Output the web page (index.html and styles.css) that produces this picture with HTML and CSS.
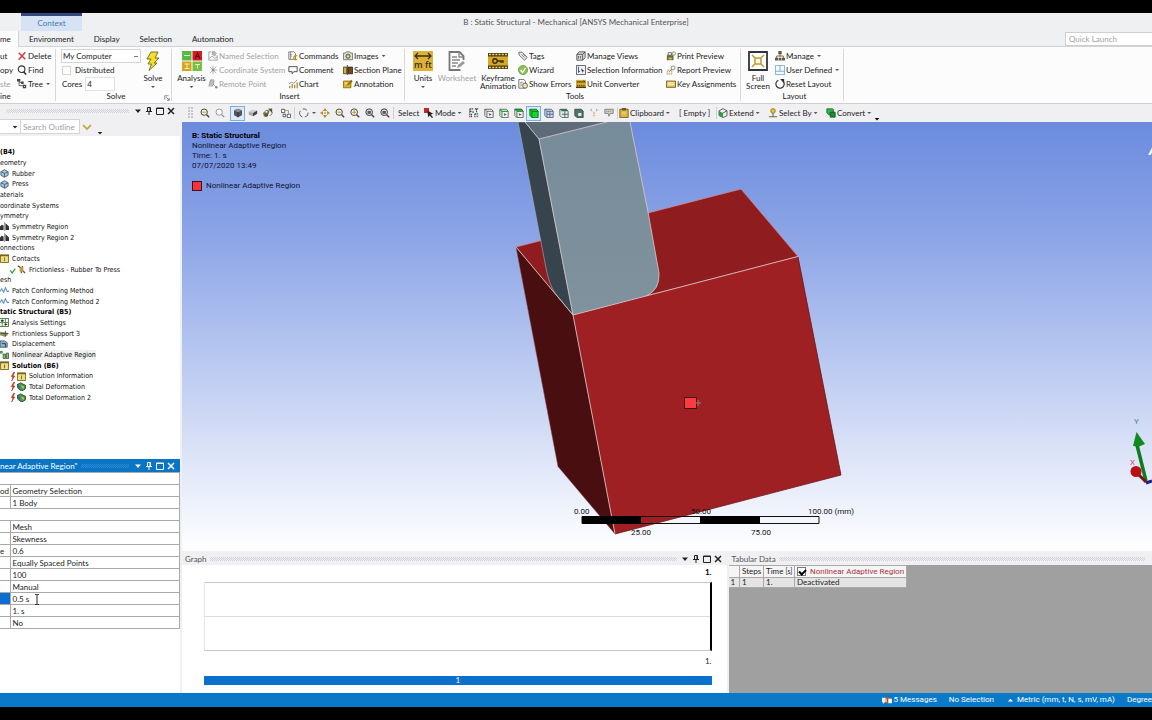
FILE: index.html
```html
<!DOCTYPE html>
<html lang="en">
<head>
  <meta charset="UTF-8" />
  <meta name="viewport" content="width=device-width, initial-scale=1.0" />
  <title>B : Static Structural - Mechanical [ANSYS Mechanical Enterprise]</title>
  <link rel="stylesheet" href="styles.css">
</head>
<body>
  <!-- Icon sprite -->
  <svg class="sprite" aria-hidden="true">
    <symbol id="i-delete" viewBox="0 0 12 12"><path d="M2 2l8 8M10 1.500L2 10.500" stroke="#d4343a" stroke-width="1.600" fill="none"/></symbol>
    <symbol id="i-find" viewBox="0 0 12 12"><circle cx="5.500" cy="5" r="4" fill="none" stroke="#333" stroke-width="1.300"/><path d="M8 8l3 3.500" stroke="#333" stroke-width="1.800"/></symbol>
    <symbol id="i-tree" viewBox="0 0 12 12"><path d="M2.500 2v6h5M3 4h3" fill="none" stroke="#444"/><path d="M0 0h4v3H0zM5 3h3v3H5zM7 7h4v4H7z" fill="#444"/><path d="M8.500 8.500h1v1h-1z" fill="#fff"/></symbol>
    <symbol id="i-bolt" viewBox="0 0 14 20"><path d="M5 1h7L9 7h4L8 12h3L3 19.500 5.500 13H2l3-5H1z" fill="#f6df27" stroke="#6d6420" stroke-width=".9"/></symbol>
    <symbol id="i-launch" viewBox="0 0 8 8"><path d="M1 6V1h5M3 3l4 4M7 4v3H4" fill="none" stroke="#555" stroke-width=".9"/></symbol>
    <symbol id="i-analysis" viewBox="0 0 20 20"><path d="M0 0h9.500v9.500H0z" fill="#57b947"/><path d="M10.500 0H20v9.500h-9.500z" fill="#d71920"/><path d="M0 10.500h9.500V20H0z" fill="#d7a51c"/><path d="M10.500 10.500H20V20h-9.500z" fill="#76c043"/><path d="M2 4.500h6M2.500 13h5M2.500 17.500h5M5 13v4M13 13.500h5M15.500 13.500v4" stroke="#e6f3c2" fill="none"/><path d="M13 8l2.500-6L18 8M14 5.500h3" fill="none" stroke="#5f0d10" stroke-width="1.200"/></symbol>
    <symbol id="i-named" viewBox="0 0 12 12"><path d="M4 1H1v10h10V5M1 9l4-3 3 3 3-2" fill="none" stroke="#999"/><path d="M5 1l2-1 3 3-2 3-3-2z" fill="#bbb" stroke="#888" stroke-width=".7"/></symbol>
    <symbol id="i-coord" viewBox="0 0 12 12"><path d="M6 1v10M2 2l8 8M10 2l-8 8M6 6h5" stroke="#aaa" stroke-width="1.100"/><circle cx="6" cy="6" r="1.500" fill="#888"/></symbol>
    <symbol id="i-remote" viewBox="0 0 12 12"><path d="M1 9l2-8h4v5l-2 3M7 7l3 3" fill="#bbb" stroke="#999"/><circle cx="10" cy="10" r="1.500" fill="#888"/></symbol>
    <symbol id="i-commands" viewBox="0 0 12 12"><path d="M1 1h6l2 2v7H1z" fill="#fff" stroke="#666"/><path d="M2 4h3M2 6h3M3 1v9" stroke="#888"/><path d="M11 6a2.500 2.500 0 1 0 0 4" fill="none" stroke="#c19a1c" stroke-width="1.500"/></symbol>
    <symbol id="i-comment" viewBox="0 0 12 12"><path d="M1 2h10v6H7L5 10.500V8H1z" fill="#fff" stroke="#444" stroke-width="1.100"/></symbol>
    <symbol id="i-chart" viewBox="0 0 12 12"><path d="M2 11V8M5 11V6M8 11V7M11 11V4" stroke="#a88c33" stroke-width="1.500"/><path d="M1 6l3-2 3 1 4-4" fill="none" stroke="#888"/></symbol>
    <symbol id="i-images" viewBox="0 0 12 12"><path d="M.5 2.500H3L4 1h4l1 1.500h2.500v8H.5z" fill="#e6e7cf" stroke="#666"/><circle cx="6" cy="6.300" r="2.600" fill="#a5af80" stroke="#4b5341"/><circle cx="6" cy="6.300" r="1" fill="#fff"/></symbol>
    <symbol id="i-section" viewBox="0 0 12 12"><path d="M.5 2.500h4v8h-4z" fill="#d8b13a" stroke="#4b3a11"/><path d="M6 2.500h5.500v8H6z" fill="#6f4b24" stroke="#33230c"/><path d="M5.200 0v12" stroke="#333"/></symbol>
    <symbol id="i-annot" viewBox="0 0 12 12"><path d="M.5 2.500h9v8h-9z" fill="#e2b422" stroke="#7e6513"/><path d="M3 8c2 1 3-4 7-7l1.500 2C9 6 7 8 3 8z" fill="#8c6e1b"/><path d="M2 5h3" stroke="#fff"/></symbol>
    <symbol id="i-units" viewBox="0 0 20 20"><path d="M0 0h20v20H0z" fill="#ddb23b"/><path d="M2 5h16M5 2L2 5l3 3M15 2l3 3-3 3" fill="none" stroke="#3b2f0d" stroke-width="1.300"/><text x="1" y="17" class="unit-text">m ft</text></symbol>
    <symbol id="i-sheet" viewBox="0 0 18 20"><path d="M15.500 9V5l-4-4H1.500v18h11" fill="none" stroke="#777" stroke-width="1.800"/><path d="M11 1v5h4M4 6h5M4 9h8M4 12h6M4 15h4" fill="none" stroke="#888" stroke-width="1.300"/><path d="M9 17l1-3 5-4 2 2-5 4z" fill="#999"/></symbol>
    <symbol id="i-key" viewBox="0 0 20 16"><path d="M0 0h20v16H0z" fill="#4d3e12"/><path d="M0 3.500h20v9H0z" fill="#d7a928"/><path d="M1 1.500h18M1 14.500h18" stroke="#e8cf82" stroke-width="1.400" stroke-dasharray="2 1.200"/><circle cx="7" cy="8" r="2.200" fill="none" stroke="#3b2f0d" stroke-width="1.400"/><path d="M9 8h6v2M13 8v2" fill="none" stroke="#3b2f0d" stroke-width="1.300"/></symbol>
    <symbol id="i-tag" viewBox="0 0 12 12"><path d="M1 1.500h4l6 6-3 3.500-6.500-6z" fill="#eee" stroke="#555"/><path d="M4 4l4 4M6 3.500l3 3" stroke="#777"/></symbol>
    <symbol id="i-wizard" viewBox="0 0 12 12"><circle cx="6" cy="6" r="5.500" fill="#8cc152" stroke="#6d9c3d"/><path d="M3 6l2.500 3L9 3.500" fill="none" stroke="#fff" stroke-width="1.600"/></symbol>
    <symbol id="i-errors" viewBox="0 0 12 12"><path d="M1 .5h6l2 2.500v8H1z" fill="#fff" stroke="#555"/><path d="M2.500 4h4M2.500 6h3M2.500 8h2" stroke="#888"/><circle cx="8.500" cy="8" r="3" fill="#f0e3b0" stroke="#555"/></symbol>
    <symbol id="i-views" viewBox="0 0 12 12"><path d="M1 4l3-3h7v7l-3 3H1z" fill="#ddd" stroke="#444"/><path d="M1 4h7v7M8 4l3-3M3 6v3M5.500 6v3" fill="none" stroke="#444"/></symbol>
    <symbol id="i-info" viewBox="0 0 12 12"><path d="M.5 .5h11v11H.5z" fill="#eef1fa" stroke="#444"/><path d="M3 2v7M3 9l2-2" stroke="#3c5ea0" stroke-width="1.200"/><path d="M6 4l4 3.500H8V10z" fill="#222"/></symbol>
    <symbol id="i-conv" viewBox="0 0 12 12"><path d="M0 1h12v10H0z" fill="#d9ac2f"/><path d="M1 3.500h10M9 2l2 1.500M2 7v2M4.500 7v2M7 7v2M9.500 7v2" stroke="#463710" stroke-width="1.200"/><path d="M0 10h12" stroke="#463710" stroke-width="1.500"/></symbol>
    <symbol id="i-print" viewBox="0 0 12 12"><path d="M1 5h8v6H1z" fill="#6d6a3a"/><path d="M2.500 2h4v3h-4z" fill="#fff" stroke="#555"/><path d="M3 8h4v2H3z" fill="#d6c36a"/><circle cx="9.500" cy="3" r="2" fill="none" stroke="#777"/></symbol>
    <symbol id="i-report" viewBox="0 0 12 12"><path d="M2 6h5v5H1z" fill="#f3eac2" stroke="#a39a77" stroke-dasharray="2 1"/><circle cx="8.500" cy="3.500" r="2.300" fill="none" stroke="#777"/><path d="M7 5L4 8" stroke="#777"/></symbol>
    <symbol id="i-keys" viewBox="0 0 12 12"><path d="M.5 2.500h11v7.500H.5z" fill="#eccb64" stroke="#614c14"/><path d="M2.500 4.500h7M2.500 6.500h7" stroke="#fff6d0" stroke-width="1.200"/></symbol>
    <symbol id="i-full" viewBox="0 0 20 20"><path d="M1 1h18v18H1z" fill="#fff" stroke="#2d3340" stroke-width="1.800"/><path d="M7 7h6v6H7zM4 4l3 3M16 4l-3 3M4 16l3-3M16 16l-3-3" fill="none" stroke="#c39b27" stroke-width="1.500"/></symbol>
    <symbol id="i-manage" viewBox="0 0 12 12"><path d="M6 3v4M2 9V6h8v3" fill="none" stroke="#66583a"/><path d="M4 0h4v4H4zM0 8h4v3.500H0zM4.700 8h3v3.500h-3zM8.300 8H12v3.500H8.300z" fill="#66583a"/></symbol>
    <symbol id="i-user" viewBox="0 0 12 12"><path d="M.5 .5h11v11H.5zM6 .5v7M.5 7.500h11" fill="#f4f9fd" stroke="#6fa2c8"/></symbol>
    <symbol id="i-reset" viewBox="0 0 12 12"><path d="M4 1.500a5 5 0 1 0 5 .5" fill="none" stroke="#333" stroke-width="1.400"/><path d="M6 0h5v5z" fill="#333"/></symbol>

    <symbol id="i-zoomin" viewBox="0 0 12 12"><circle cx="5" cy="5" r="3.800" fill="#fbf4d8" stroke="#444" stroke-width="1.200"/><path d="M8 8l3 3" stroke="#444" stroke-width="1.800"/><path d="M3 5h4" stroke="#b08c1e" stroke-width="1.200"/></symbol>
    <symbol id="i-zoomout" viewBox="0 0 12 12"><circle cx="5" cy="5" r="3.800" fill="#fff" stroke="#888"/><path d="M8 8l3 3" stroke="#888" stroke-width="1.500"/></symbol>
    <symbol id="i-zoomfit" viewBox="0 0 12 12"><circle cx="5" cy="5" r="4" fill="#fff" stroke="#444" stroke-width="1.200"/><path d="M8 8l3 3" stroke="#444" stroke-width="1.800"/><path d="M5 2.500v5M2.500 5h5" stroke="#c0951c" stroke-width="1.300"/></symbol>
    <symbol id="i-zoomsel" viewBox="0 0 12 12"><circle cx="5" cy="5" r="4" fill="#ddd" stroke="#444" stroke-width="1.200"/><path d="M8 8l3 3" stroke="#444" stroke-width="1.800"/><path d="M3 3.500h4v3.500H3z" fill="#556"/></symbol>
    <symbol id="i-shade" viewBox="0 0 12 12"><path d="M6 .8l4.800 2v6L6 11.200l-4.800-2.400v-6z" fill="#50565e"/><path d="M1.200 2.800L6 .8l4.800 2L6 5z" fill="#8c9299"/><path d="M6 5v6.200" stroke="#222"/></symbol>
    <symbol id="i-wedge" viewBox="0 0 12 12"><path d="M1 4l5 2v4L1 8z" fill="#aaa"/><path d="M1 4l5-2 5 1-5 3z" fill="#ccc"/><path d="M6 6l5-3v4l-5 3z" fill="#444"/></symbol>
    <symbol id="i-rotor" viewBox="0 0 12 12"><path d="M0 6l4-4 4 1-1 4-3 4-3-1z" fill="#8a7448"/><path d="M6 1l5-.5V6M2 7h4v3H2z" fill="#54514b"/><circle cx="4" cy="4.500" r="1.200" fill="#eee"/><path d="M8 9c2 0 3-2 3-4" fill="none" stroke="#555"/></symbol>
    <symbol id="i-blocks" viewBox="0 0 12 12"><path d="M.5 1.500h4v4h-4zM7.500 7.500h4v4h-4zM2.500 7.500h3v3h-3z" fill="#fff" stroke="#444"/><path d="M5 3h4v4" fill="none" stroke="#b8912a"/></symbol>
    <symbol id="i-rotate" viewBox="0 0 12 12"><path d="M4.500 1.200a5 5 0 0 1 5 1.500M11 5.500a5 5 0 0 1-4 5.300M4 10.800a5 5 0 0 1-2.500-7.500" fill="none" stroke="#555" stroke-width="1.100"/></symbol>
    <symbol id="i-pan" viewBox="0 0 12 12"><path d="M6 0l2.500 3.500h-5zM6 12l2.500-3.500h-5zM0 6l3.500-2.500v5zM12 6L8.500 3.500v5z" fill="#b98a1c"/><circle cx="6" cy="6" r="1" fill="#8a6b1c"/></symbol>
    <symbol id="i-mode" viewBox="0 0 12 12"><path d="M0 0h6v6H0z" fill="#c7252b"/><path d="M4 3l7 4-3 1 3 3-1.500 1-2.700-3L5 11z" fill="#222"/></symbol>
    <symbol id="i-vertex" viewBox="0 0 12 12"><path d="M1 1h4M1 4h3M1 1v10M7 1h4M9 1v4M7 7h4M7 7v4M3 7v4" fill="none" stroke="#444" stroke-dasharray="2 .7" stroke-width="1.300"/><path d="M4 4h2v2H4zM9 9h2v2H9z" fill="#39a34a"/></symbol>
    <symbol id="i-box" viewBox="0 0 12 12"><path d="M1 1.500h8L11 4v7.500H3.500L1 9z" fill="#f4f4f4" stroke="#555"/><path d="M1 1.500L3.500 4H11M3.500 4v7.500" fill="none" stroke="#555"/><path d="M5.500 6l4 2-2 .5L7 10z" fill="#444"/></symbol>
    <symbol id="i-boxedge" viewBox="0 0 12 12"><path d="M1 1.500h8L11 4v7.500H3.500L1 9z" fill="#f4f4f4" stroke="#555"/><path d="M1 1.500L3.500 4H11M3.500 4v7.500" fill="none" stroke="#2b9e3f" stroke-width="1.300"/><path d="M5.500 6l4 2-2 .5L7 10z" fill="#444"/></symbol>
    <symbol id="i-boxface" viewBox="0 0 12 12"><path d="M1 1.500h8L11 4v7.500H3.500L1 9z" fill="#f4f4f4" stroke="#555"/><path d="M1 1.500h8L11 4H3.500z" fill="#35b24a" stroke="#14692a"/><path d="M3.500 4v7.500" stroke="#14692a"/><path d="M5.500 6l4 2-2 .5L7 10z" fill="#444"/></symbol>
    <symbol id="i-body" viewBox="0 0 12 12"><path d="M1 1.500h8L11 4v7.500H3.500L1 9z" fill="#14d82c" stroke="#0b6f1c"/><path d="M1 1.500L3.500 4H11M3.500 4v7.500" fill="none" stroke="#0b6f1c"/></symbol>
    <symbol id="i-mesh" viewBox="0 0 12 12"><path d="M1 1.500h8L11 4v7.500H3.500L1 9z" fill="#cdd9ea" stroke="#4a5f78"/><path d="M1 1.500L3.500 4H11M3.500 4v7.500M3.500 7.500H11M7 4v7" fill="none" stroke="#4a5f78"/></symbol>
    <symbol id="i-face" viewBox="0 0 12 12"><path d="M1 1.500h8L11 4v7.500H3.500L1 9z" fill="#dfe9e2" stroke="#3f5b52"/><path d="M1 1.500h8L11 4H3.500z" fill="#2f6b4a"/><path d="M3.500 7.500H11M7 4v7" stroke="#3f5b52"/></symbol>
    <symbol id="i-elem" viewBox="0 0 12 12"><path d="M1 1.500h8L11 4v7.500H3.500L1 9z" fill="#4f7466" stroke="#33453f"/><path d="M5 6h4v3.500H5z" fill="#dfe9e2"/></symbol>
    <symbol id="i-probe" viewBox="0 0 12 12"><path d="M1 2l3 2M11 2L8 4M3 1v2M9 1v2" stroke="#aaa"/><path d="M6 5v6" stroke="#c49a4a" stroke-width="1.500" stroke-dasharray="2 1"/></symbol>
    <symbol id="i-note" viewBox="0 0 12 12"><path d="M1 1.500h10v5H7.500L6 10 5 6.500H1z" fill="#cfd0c0" stroke="#777"/><path d="M3 4h6" stroke="#666" stroke-dasharray="1 1"/></symbol>
    <symbol id="i-clip" viewBox="0 0 12 12"><path d="M1 1.500h10v10H1z" fill="#dfb23a" stroke="#6e5615"/><path d="M3.500 0h5v3h-5z" fill="#6e5615"/><path d="M3 5h6M3 7h6" stroke="#f3d98c"/></symbol>
    <symbol id="i-extend" viewBox="0 0 12 12"><path d="M6 .8l4.800 2.500v6L6 11.500l-4.800-2.500V3.500z" fill="#e9f2ea" stroke="#444"/><path d="M1.200 3.500L6 6v5.500l-4.800-2.500z" fill="#2a9c42"/><path d="M6 6l4.800-2.700" stroke="#444"/></symbol>
    <symbol id="i-selby" viewBox="0 0 12 12"><circle cx="6" cy="3.500" r="2.800" fill="#e7bd42" stroke="#997817"/><path d="M6 6v4M1 10.500h10" stroke="#666" stroke-width="1.300"/></symbol>
    <symbol id="i-convert" viewBox="0 0 12 12"><path d="M1 1h7l1 1v6H3L1 6z" fill="#35b24a" stroke="#116b25"/><path d="M5 5h6v6H5z" fill="#1d8c33" stroke="#0c551b"/></symbol>

    <symbol id="i-down" viewBox="0 0 8 8"><path d="M1 2.500h6L4 6z" fill="currentColor"/></symbol>
    <symbol id="i-pin" viewBox="0 0 8 8"><path d="M2.500 .5h3v4h-3zM1 4.500h6M4 4.500V8M5 .5v4" fill="none" stroke="currentColor"/></symbol>
    <symbol id="i-max" viewBox="0 0 8 8"><path d="M.5 1h7v6.500h-7zM.5 1.500h7" fill="none" stroke="currentColor"/></symbol>
    <symbol id="i-close" viewBox="0 0 8 8"><path d="M1 1l6 6M7 1L1 7" fill="none" stroke="currentColor" stroke-width="1.500"/></symbol>
    <symbol id="i-chev" viewBox="0 0 10 8"><path d="M1 2l4 4 4-4" fill="none" stroke="#c3a03d" stroke-width="1.700"/></symbol>

    <symbol id="t-body" viewBox="0 0 10 10"><path d="M5 .8L9 3v4L5 9.200 1 7V3z" fill="#a9c3d4" stroke="#41647a"/><path d="M1 3l4 2 4-2M5 5v4" fill="none" stroke="#41647a"/></symbol>
    <symbol id="t-sym" viewBox="0 0 10 10"><path d="M0 9V5l2-2 2 1v5zM6 9V1l4 4v4z" fill="#333"/><path d="M5 0v10" stroke="#999"/></symbol>
    <symbol id="t-folder" viewBox="0 0 10 10"><path d="M.5 1.500h9v8h-9z" fill="#f0dd85" stroke="#77651c"/><path d="M0 1.500h10" stroke="#77651c" stroke-width="2"/><path d="M5 4v4" stroke="#77651c"/></symbol>
    <symbol id="t-contact" viewBox="0 0 10 10"><path d="M1 1l3 2 1 6M9 9L6 6V1" fill="none" stroke="#74581f" stroke-width="1.500"/><path d="M3 3l4-1v5l-4 1z" fill="#c29a4d"/></symbol>
    <symbol id="t-check" viewBox="0 0 6 10"><path d="M0 6l2 3 3.500-5" fill="none" stroke="#2d9b45" stroke-width="1.300"/></symbol>
    <symbol id="t-patch" viewBox="0 0 10 10"><path d="M0 6l2-3 2 4 2-5 2 4 2 0" fill="none" stroke="#5e8fc9" stroke-width="1.200"/></symbol>
    <symbol id="t-settings" viewBox="0 0 10 10"><path d="M0 .5h9.500v9H0" fill="#eef6ea" stroke="#456b3b"/><path d="M2.500 1v8M6 1v8M0 5h9" stroke="#5a8450"/><path d="M1 3h3M5 7h3" stroke="#333" stroke-width="1.500"/></symbol>
    <symbol id="t-support" viewBox="0 0 10 10"><path d="M0 3l7 1 3 1-4 4-6-2z" fill="#8a9169"/><path d="M1 5h8M6 2v6" stroke="#4d553a"/></symbol>
    <symbol id="t-disp" viewBox="0 0 10 10"><path d="M0 1h5l3 2v5H0z" fill="#8fb3c9" stroke="#3f5f74"/><path d="M2 4h4v4" fill="none" stroke="#20394a"/></symbol>
    <symbol id="t-adapt" viewBox="0 0 10 10"><path d="M0 1h3v3H0z" fill="#4c9a41"/><path d="M3.500 4.500h2.500v5H3.500zM7 3.500h2.500v6H7z" fill="#8cc07d" stroke="#41603b"/></symbol>
    <symbol id="t-bolt" viewBox="0 0 6 10"><path d="M4 0L1 5h2L1.500 10 5 4.500H3L5 0z" fill="#d8452c" stroke="#a5301b" stroke-width=".6"/></symbol>
    <symbol id="t-deform" viewBox="0 0 10 10"><path d="M0 3l4-2 6 3-1 4-4 2-4-3z" fill="#3f9a57" stroke="#2c4b34"/><path d="M4 4l4 1-1 3z" fill="#e5b93a"/><path d="M1 4l2 2" stroke="#2c61a8" stroke-width="1.500"/></symbol>
    <symbol id="i-msg" viewBox="0 0 12 10"><path d="M1 2h5v5H4L2 9V7H1z" fill="#f2f2f2"/><path d="M5 1h4v7H5z" fill="#b9502f"/><path d="M8 3h4v5H8z" fill="#fff"/><path d="M6 3v4" stroke="#f0c75c"/></symbol>
  </svg>

  <div class="app">
    <header class="titlebar">
      <div class="context-holder"><span class="context-tab">Context</span></div>
      <h1>B : Static Structural - Mechanical [ANSYS Mechanical Enterprise]</h1>
    </header>

    <div class="tabrow">
      <nav class="tabs">
        <button class="tab active">me</button>
        <button class="tab">Environment</button>
        <button class="tab">Display</button>
        <button class="tab">Selection</button>
        <button class="tab">Automation</button>
      </nav>
      <input class="quick" type="text" placeholder="Quick Launch" aria-label="Quick Launch">
    </div>

    <!-- Ribbon -->
    <div class="ribbon">
      <section class="group g-outline">
        <div class="group-body">
          <div class="stack">
            <button class="cmd">ut</button>
            <button class="cmd">opy</button>
            <button class="cmd off">ste</button>
          </div>
          <div class="stack">
            <button class="cmd"><svg><use href="#i-delete"/></svg>Delete</button>
            <button class="cmd"><svg><use href="#i-find"/></svg>Find</button>
            <button class="cmd"><svg><use href="#i-tree"/></svg>Tree<i class="caret"></i></button>
          </div>
        </div>
        <h2>ine</h2>
      </section>

      <section class="group g-solve">
        <div class="group-body">
          <div class="stack">
            <select class="computer" aria-label="Solve on"><option>My Computer</option></select>
            <label class="check"><input type="checkbox">Distributed</label>
            <label class="cores">Cores<input type="text" value="4"></label>
          </div>
          <button class="big"><svg><use href="#i-bolt"/></svg>Solve<i class="caret"></i></button>
        </div>
        <h2>Solve</h2>
        <button class="launcher" aria-label="Solve options"><svg><use href="#i-launch"/></svg></button>
      </section>

      <section class="group g-insert">
        <div class="group-body">
          <button class="big"><svg><use href="#i-analysis"/></svg>Analysis<i class="caret"></i></button>
          <div class="stack">
            <button class="cmd off"><svg><use href="#i-named"/></svg>Named Selection</button>
            <button class="cmd off"><svg><use href="#i-coord"/></svg>Coordinate System</button>
            <button class="cmd off"><svg><use href="#i-remote"/></svg>Remote Point</button>
          </div>
          <div class="stack">
            <button class="cmd"><svg><use href="#i-commands"/></svg>Commands</button>
            <button class="cmd"><svg><use href="#i-comment"/></svg>Comment</button>
            <button class="cmd"><svg><use href="#i-chart"/></svg>Chart</button>
          </div>
          <div class="stack">
            <button class="cmd"><svg><use href="#i-images"/></svg>Images<i class="caret"></i></button>
            <button class="cmd"><svg><use href="#i-section"/></svg>Section Plane</button>
            <button class="cmd"><svg><use href="#i-annot"/></svg>Annotation</button>
          </div>
        </div>
        <h2>Insert</h2>
      </section>

      <section class="group g-tools">
        <div class="group-body">
          <button class="big"><svg><use href="#i-units"/></svg>Units<i class="caret"></i></button>
          <button class="big off"><svg><use href="#i-sheet"/></svg>Worksheet</button>
          <button class="big"><svg><use href="#i-key"/></svg>Keyframe<br>Animation</button>
          <div class="stack">
            <button class="cmd"><svg><use href="#i-tag"/></svg>Tags</button>
            <button class="cmd"><svg><use href="#i-wizard"/></svg>Wizard</button>
            <button class="cmd"><svg><use href="#i-errors"/></svg>Show Errors</button>
          </div>
          <div class="stack">
            <button class="cmd"><svg><use href="#i-views"/></svg>Manage Views</button>
            <button class="cmd"><svg><use href="#i-info"/></svg>Selection Information</button>
            <button class="cmd"><svg><use href="#i-conv"/></svg>Unit Converter</button>
          </div>
          <div class="stack">
            <button class="cmd"><svg><use href="#i-print"/></svg>Print Preview</button>
            <button class="cmd"><svg><use href="#i-report"/></svg>Report Preview</button>
            <button class="cmd"><svg><use href="#i-keys"/></svg>Key Assignments</button>
          </div>
        </div>
        <h2>Tools</h2>
      </section>

      <section class="group g-layout">
        <div class="group-body">
          <button class="big"><svg><use href="#i-full"/></svg>Full<br>Screen</button>
          <div class="stack">
            <button class="cmd"><svg><use href="#i-manage"/></svg>Manage<i class="caret"></i></button>
            <button class="cmd"><svg><use href="#i-user"/></svg>User Defined<i class="caret"></i></button>
            <button class="cmd"><svg><use href="#i-reset"/></svg>Reset Layout</button>
          </div>
        </div>
        <h2>Layout</h2>
      </section>
    </div>

    <div class="workspace">
      <aside class="sidebar">
        <section class="outline">
          <div class="panel-head">
            <span class="dots"></span>
            <span class="controls">
              <button aria-label="Menu"><svg><use href="#i-down"/></svg></button>
              <button aria-label="Pin"><svg><use href="#i-pin"/></svg></button>
              <button aria-label="Maximize"><svg><use href="#i-max"/></svg></button>
              <button aria-label="Close"><svg><use href="#i-close"/></svg></button>
            </span>
          </div>
          <div class="search">
            <button class="filter" aria-label="Filter"><svg><use href="#i-down"/></svg></button>
            <input type="text" placeholder="Search Outline" aria-label="Search Outline">
            <button aria-label="Expand"><svg class="chev"><use href="#i-chev"/></svg></button>
            <button class="more" aria-label="More"><svg><use href="#i-down"/></svg></button>
          </div>
          <ul class="tree">
            <li class="root bold">(B4)</li>
            <li class="root">eometry</li>
            <li><svg><use href="#t-body"/></svg>Rubber</li>
            <li><svg><use href="#t-body"/></svg>Press</li>
            <li class="root">aterials</li>
            <li class="root">oordinate Systems</li>
            <li class="root">ymmetry</li>
            <li><svg><use href="#t-sym"/></svg>Symmetry Region</li>
            <li><svg><use href="#t-sym"/></svg>Symmetry Region 2</li>
            <li class="root">onnections</li>
            <li><svg><use href="#t-folder"/></svg>Contacts</li>
            <li class="leaf"><svg class="state"><use href="#t-check"/></svg><svg><use href="#t-contact"/></svg>Frictionless - Rubber To Press</li>
            <li class="root">esh</li>
            <li><svg><use href="#t-patch"/></svg>Patch Conforming Method</li>
            <li><svg><use href="#t-patch"/></svg>Patch Conforming Method 2</li>
            <li class="root bold">tatic Structural (B5)</li>
            <li><svg><use href="#t-settings"/></svg>Analysis Settings</li>
            <li><svg><use href="#t-support"/></svg>Frictionless Support 3</li>
            <li><svg><use href="#t-disp"/></svg>Displacement</li>
            <li><svg><use href="#t-adapt"/></svg><span class="current">Nonlinear Adaptive Region</span></li>
            <li class="bold"><svg><use href="#t-folder"/></svg>Solution (B6)</li>
            <li class="leaf"><svg class="state"><use href="#t-bolt"/></svg><svg><use href="#t-folder"/></svg>Solution Information</li>
            <li class="leaf"><svg class="state"><use href="#t-bolt"/></svg><svg><use href="#t-deform"/></svg>Total Deformation</li>
            <li class="leaf"><svg class="state"><use href="#t-bolt"/></svg><svg><use href="#t-deform"/></svg>Total Deformation 2</li>
          </ul>
        </section>

        <section class="details">
          <div class="panel-head blue">
            <span class="head-title">near Adaptive Region"</span>
            <span class="dots"></span>
            <span class="controls">
              <button aria-label="Menu"><svg><use href="#i-down"/></svg></button>
              <button aria-label="Pin"><svg><use href="#i-pin"/></svg></button>
              <button aria-label="Maximize"><svg><use href="#i-max"/></svg></button>
              <button aria-label="Close"><svg><use href="#i-close"/></svg></button>
            </span>
          </div>
          <table class="props">
            <colgroup><col class="name-col"><col></colgroup>
            <tr><td colspan="2"></td></tr>
            <tr><th>od</th><td>Geometry Selection</td></tr>
            <tr><th></th><td>1 Body</td></tr>
            <tr><td colspan="2"></td></tr>
            <tr><th></th><td>Mesh</td></tr>
            <tr><th></th><td>Skewness</td></tr>
            <tr><th>e</th><td>0.6</td></tr>
            <tr><th></th><td>Equally Spaced Points</td></tr>
            <tr><th></th><td>100</td></tr>
            <tr><th></th><td>Manual</td></tr>
            <tr class="editing"><th></th><td>0.5 s<svg class="ibeam" viewBox="0 0 6 11"><path d="M1 .5h1.500L3 1l.5-.5H5M3 1v9M1 10.500h1.500L3 10l.5.5H5" fill="none" stroke="#222"/></svg></td></tr>
            <tr><th></th><td>1. s</td></tr>
            <tr><th></th><td>No</td></tr>
          </table>
        </section>
      </aside>

      <main class="main">
        <div class="toolbar">
          <span class="grip"></span>
          <button class="tool" aria-label="Zoom in"><svg><use href="#i-zoomin"/></svg></button>
          <button class="tool" aria-label="Zoom out"><svg><use href="#i-zoomout"/></svg></button>
          <span class="space"></span>
          <button class="tool on" aria-label="Shaded"><svg><use href="#i-shade"/></svg></button>
          <button class="tool" aria-label="Wireframe"><svg><use href="#i-wedge"/></svg></button>
          <button class="tool" aria-label="Thicken"><svg><use href="#i-rotor"/></svg></button>
          <span class="space"></span>
          <button class="tool" aria-label="Explode"><svg><use href="#i-blocks"/></svg></button>
          <span class="rule"></span>
          <button class="tool" aria-label="Rotate"><svg><use href="#i-rotate"/></svg></button>
          <i class="caret rot"></i>
          <button class="tool" aria-label="Pan"><svg><use href="#i-pan"/></svg></button>
          <button class="tool" aria-label="Zoom"><svg><use href="#i-zoomin"/></svg></button>
          <button class="tool" aria-label="Box zoom"><svg><use href="#i-zoomfit"/></svg></button>
          <button class="tool" aria-label="Zoom to fit"><svg><use href="#i-zoomsel"/></svg></button>
          <button class="tool" aria-label="Zoom to selection"><svg><use href="#i-zoomsel"/></svg></button>
          <span class="rule"></span>
          <span class="t-select">Select</span>
          <button class="word t-mode"><svg><use href="#i-mode"/></svg>Mode<i class="caret"></i></button>
          <button class="tool" aria-label="Vertex"><svg><use href="#i-vertex"/></svg></button>
          <button class="tool" aria-label="Point"><svg><use href="#i-box"/></svg></button>
          <button class="tool" aria-label="Edge"><svg><use href="#i-boxedge"/></svg></button>
          <button class="tool" aria-label="Face"><svg><use href="#i-boxface"/></svg></button>
          <button class="tool on" aria-label="Body"><svg><use href="#i-body"/></svg></button>
          <button class="tool" aria-label="Node"><svg><use href="#i-mesh"/></svg></button>
          <button class="tool" aria-label="Element face"><svg><use href="#i-face"/></svg></button>
          <button class="tool" aria-label="Element"><svg><use href="#i-elem"/></svg></button>
          <button class="tool" aria-label="Probe"><svg><use href="#i-probe"/></svg></button>
          <button class="tool" aria-label="Label"><svg><use href="#i-note"/></svg></button>
          <span class="rule"></span>
          <button class="word t-clip"><svg><use href="#i-clip"/></svg>Clipboard<i class="caret"></i></button>
          <span class="t-empty">[ Empty ]</span>
          <span class="rule"></span>
          <button class="word t-extend"><svg><use href="#i-extend"/></svg>Extend<i class="caret"></i></button>
          <button class="word t-selby"><svg><use href="#i-selby"/></svg>Select By<i class="caret"></i></button>
          <button class="word t-convert"><svg><use href="#i-convert"/></svg>Convert<i class="caret"></i></button>
          <button class="more" aria-label="More"><svg><use href="#i-down"/></svg></button>
        </div>

        <div class="viewport">
          <svg class="scene" viewBox="182 122 970 429" preserveAspectRatio="xMidYMid slice">
            <defs>
              <linearGradient id="steel" x1="0" y1="0" x2="0" y2="1">
                <stop offset="0" stop-color="#778c9a"/><stop offset="1" stop-color="#7f929d"/>
              </linearGradient>
            </defs>
            <!-- rubber block -->
            <path d="M516 247L741 189 798 256.500 573 315z" fill="#8f1c1f" stroke="#d98c8c" stroke-width=".7"/>
            <path d="M516 247L573 315 615 534 558 466.500z" fill="#480e10" stroke="#8a4a4a" stroke-width=".5"/>
            <path d="M573 315L798 256.500 841 475 615 534z" fill="#9e2022"/>
            <!-- press -->
            <path d="M518 122h7l14 17 34 176-18-22q-6-9-9-25z" fill="#37434d" stroke="#a3b4bd" stroke-width=".6"/>
            <path d="M525 122h82l-68 17z" fill="#5e6c79"/>
            <path d="M539 139L607 122h23l18 90 11 61q1 17-13 23l-73 19z" fill="url(#steel)"/>
            <path d="M525 122l14 17 68-17M539 139l34 176 225-58.500M630 122l18 90 11 61q1 17-13 23M573 315l42 219M516 247l57 68" fill="none" stroke="#dcc9cb" stroke-width=".8"/>
            <path d="M615 534l226-59-43-218" fill="none" stroke="#6b1719" stroke-width=".8"/>
            <!-- label anchor -->
            <path d="M684.500 397.500h12v11h-12z" fill="#ff3a3d" stroke="#3c0a0a"/>
            <path d="M695 403h6M698 400v6" stroke="#a77"/>
            <!-- ruler -->
            <path d="M582 516.500h237v7H582z" fill="none" stroke="#111"/>
            <path d="M582 516h59v8h-59zM700 516h60v8h-60z" fill="#000"/>
            <text x="574" y="514">0.00</text>
            <text x="691" y="514">50.00</text>
            <text x="808" y="514">100.00 (mm)</text>
            <text x="631" y="535">25.00</text>
            <text x="751" y="535">75.00</text>
            <!-- triad -->
            <path d="M1146 481l-9-36" stroke="#0f7a1e" stroke-width="3.500"/>
            <path d="M1136.500 432l8.500 12-6 2.500-6-.5z" fill="#0f8a20"/>
            <path d="M1146 482l-9-9" stroke="#7a1410" stroke-width="3"/>
            <circle cx="1136" cy="471.500" r="5.500" fill="#b80f14"/>
            <path d="M1146 483l6-2" stroke="#16228a" stroke-width="3"/>
            <text x="1134" y="424" class="axis-y">Y</text>
            <text x="1130" y="465" class="axis-x">X</text>
            <text x="1149" y="155" class="brand">ANSYS</text>
          </svg>
          <div class="caption">
            <strong>B: Static Structural</strong>
            <p>Nonlinear Adaptive Region</p>
            <p>Time: 1. s</p>
            <p>07/07/2020 13:49</p>
            <p class="legend"><i></i>Nonlinear Adaptive Region</p>
          </div>
        </div>

        <div class="bottom">
          <section class="graph">
            <div class="panel-head">
              <span class="head-title">Graph</span>
              <span class="dots"></span>
              <span class="controls">
                <button aria-label="Menu"><svg><use href="#i-down"/></svg></button>
                <button aria-label="Pin"><svg><use href="#i-pin"/></svg></button>
                <button aria-label="Maximize"><svg><use href="#i-max"/></svg></button>
                <button aria-label="Close"><svg><use href="#i-close"/></svg></button>
              </span>
            </div>
            <div class="chart">
              <span class="tick strong">1.</span>
              <div class="plot"></div>
              <span class="tick low">1.</span>
              <div class="stepbar">1</div>
            </div>
          </section>

          <section class="tabular">
            <div class="panel-head">
              <span class="head-title">Tabular Data</span>
              <span class="dots"></span>
            </div>
            <table class="data">
              <tr>
                <th class="num"></th>
                <th class="steps">Steps</th>
                <th class="time">Time <small>[s]</small></th>
                <th class="region"><label><input type="checkbox" checked>Nonlinear Adaptive Region</label></th>
              </tr>
              <tr><td>1</td><td>1</td><td>1.</td><td>Deactivated</td></tr>
            </table>
          </section>
        </div>
      </main>
    </div>

    <footer class="status">
      <span class="messages"><svg><use href="#i-msg"/></svg>5 Messages</span>
      <span>No Selection</span>
      <span class="metric"><i class="up"></i>Metric (mm, t, N, s, mV, mA)</span>
      <span>Degree</span>
    </footer>
  </div>
</body>
</html>
```
FILE: styles.css
```css
/* Base */
* { box-sizing: border-box; }
html, body {
  margin: 0; padding: 0;
  height: 100%;
  overflow: hidden; background: #000;
}
body, button, input, select {
  font-family: Lato, "Open Sans", sans-serif;
  font-size: 8px;
  line-height: 10px;
  color: #222;
}
button {
  padding: 0; border: 0;
  background: none;
  white-space: nowrap;
}
input, select { padding: 0; margin: 0; border-radius: 0; }
h1, h2, p, ul { margin: 0; padding: 0; font-weight: normal; }
svg { display: block; flex: none; }
.sprite { position: absolute; width: 0; height: 0; }
.app {
  display: flex; flex-direction: column;
  height: 100vh;
  padding: 13px 0;
}
.caret {
  display: inline-block;
  width: 4px; height: 2px;
  margin-left: 2px;
  background: #555;
  clip-path: polygon(0 0, 100% 0, 50% 100%);
}
.off { color: #a3a3a3; }

/* Title and tabs */
.titlebar {
  display: grid;
  grid-template-columns: 1fr auto 1fr;
  align-items: center;
  height: 18px;
  background: #eff0f2;
}
.titlebar h1 { font-size: 8px; color: #555; }
.context-holder { padding-left: 21px; }
.context-tab {
  display: block;
  width: 61px; height: 18px;
  border-top: 3px solid #34487d;
  background: #d5e3f5;
  color: #4a78b0;
  line-height: 15px;
  text-align: center;
}
.tabrow {
  display: flex; justify-content: space-between;
  height: 16px;
  background: #eff0f2;
  border-bottom: 1px solid #d3d3d5;
}
.tabs { display: flex; }
.tab { padding: 0 10px; }
.tab.active {
  width: 19px; height: 16px;
  padding: 0;
  text-align: left;
  background: #fcfcfc;
  border-right: 1px solid #d3d3d5;
}
.quick {
  width: 87px; height: 14px;
  margin-top: 1px;
  padding-left: 3px;
  border: 1px solid #cfcfd1;
  border-right: 0;
}
::placeholder { color: #a0a0a0; opacity: 1; }

/* Ribbon */
.ribbon {
  display: flex;
  height: 56px;
  padding: 2px 0;
  background: #fcfcfc;
}
.group {
  position: relative;
  border-right: 1px solid #d8d8d8;
}
.group-body { display: flex; height: 42px; }
.group h2 { font-size: 8px; text-align: center; }
.stack { display: grid; grid-template-rows: repeat(3, 14px); align-content: start; }
.cmd {
  display: flex; align-items: center;
  gap: 1px;
  text-align: left;
}
.cmd svg { width: 10px; height: 10px; }
.big {
  display: flex; flex-direction: column; align-items: center;
  padding-top: 2px;
  line-height: 8px;
}
.big svg { width: 20px; height: 20px; margin-bottom: 3px; }
.big .caret { margin: 4px 0 0; }
.g-outline { width: 56px; }
.g-outline .group-body { display: grid; grid-template-columns: 17px 1fr; }
.g-outline h2 { text-align: left; }
.g-solve { width: 116px; padding-left: 5px; }
.g-solve .group-body { display: grid; grid-template-columns: 80px 24px; }
.g-insert { width: 233px; padding-left: 3px; }
.g-insert .group-body { display: grid; grid-template-columns: 31px 1fr 1fr 1fr; grid-template-columns: 33px 80px 55px 1fr; }
.g-tools { width: 336px; padding-left: 5px; }
.g-tools .group-body { display: grid; grid-template-columns: 26px 42px 40px 58px 90px 1fr; }
.g-layout { width: 103px; padding-left: 5px; }
.g-layout .group-body { display: grid; grid-template-columns: 24px 1fr; column-gap: 5px; }
.computer {
  appearance: none;
  height: 14px;
  padding-left: 1px;
  border: 1px solid #d5d5d5;
  background: #fff linear-gradient(#777, #777) 72px 6px / 4px 1px no-repeat;
}
.check, .cores { display: flex; align-items: center; }
.check input {
  appearance: none;
  width: 9px; height: 9px;
  margin: 0 4px 0 1px;
  border: 1px solid #d5d5d5;
  background: #fff;
}
.cores { gap: 3px; padding-left: 1px; }
.cores input {
  width: 30px; height: 14px;
  border: 1px solid #e2e2e2;
  padding-left: 1px;
}
.launcher { position: absolute; right: 1px; bottom: 0; }
.launcher svg { width: 6px; height: 6px; }
.unit-text { font: 600 9px "Open Sans", sans-serif; fill: #3b2f0d; }

/* Workspace */
.workspace {
  display: grid;
  grid-template-columns: 180px 1fr;
  column-gap: 2px;
  flex: 1; min-height: 0;
  background: #eff0f2;
  border-top: 1px solid #cfcfd1;
}
.panel-head {
  display: flex; align-items: center;
  height: 13px;
  padding: 0 4px 0 3px;
  background: #f0f0f2;
  color: #555;
}
.dots {
  flex: 1; height: 4px;
  margin: 0 3px;
  background: repeating-conic-gradient(#d2d4d9 0 25%, #f0f0f2 0 50%) 0 0 / 2px 2px;
}
.controls { display: flex; color: #222; }
.controls button { width: 11px; color: inherit; }
.controls svg { width: 8px; height: 8px; margin: auto; }
.panel-head.blue { background: #0a75c5; color: #fff; padding-left: 0; }
.panel-head.blue .dots { background: repeating-conic-gradient(#2c8bd2 0 25%, #0a75c5 0 50%) 0 0 / 2px 2px; }
.panel-head.blue .controls { color: #fff; }
.more svg { width: 6px; height: 6px; }

/* Sidebar */
.sidebar { display: flex; flex-direction: column; background: #fff; }
.outline { flex: 0 0 355px; }
.search {
  display: flex; align-items: center;
  height: 19px;
  background: #f0f0f2;
}
.search input {
  width: 60px; height: 15px;
  padding-left: 2px;
  border: 1px solid #d5d5d5;
}
.filter {
  width: 20px; height: 15px;
  padding-right: 2px;
  background: #fff;
  border: 1px solid #d5d5d5; border-width: 1px 0;
}
.filter svg { width: 6px; height: 6px; margin-left: auto; }
.chev { width: 10px; height: 8px; margin: 0 5px 0 2px; }
.search .more { align-self: end; }
.tree {
  display: grid; grid-auto-rows: 1fr;
  height: 256px;
  margin-top: 11px;
  list-style: none;
  font-family: "DejaVu Sans Condensed", "Open Sans", sans-serif;
  font-size: 7px;
}
.tree li {
  display: flex; align-items: center;
  white-space: nowrap;
  color: #111;
}
.tree svg { width: 9px; height: 9px; margin-right: 3px; }
.tree .leaf { padding-left: 10px; }
.tree .leaf svg { margin-right: 3px; }
.tree .leaf .state { width: 6px; margin-right: 1px; }
.tree .bold { font-weight: bold; color: #000; }
.current { background: #f0f0f0; }
.props {
  width: 100%;
  border-collapse: collapse;
  table-layout: fixed;
}
.name-col { width: 10px; }
.props tr { height: 12px; }
.props td, .props th {
  height: 12px;
  padding: 0 2px;
  border: 1px solid #a9a9a9;
  font-weight: normal;
  line-height: 10px;
  text-align: left;
}
.props th { padding: 0; border-left: 0; white-space: nowrap; }
.props td:first-child { border-left: 0; }
.editing th { background: #0a6fd0; }
.ibeam { display: inline-block; width: 6px; height: 11px; margin: -2px 0 -3px 5px; }

/* Toolbar */
.main { display: flex; flex-direction: column; min-width: 0; }
.toolbar {
  display: flex; align-items: center;
  height: 18px;
  padding-left: 6px;
  background: #f0f0f2;
}
.grip {
  width: 5px; height: 12px;
  margin-right: 4px;
  background: radial-gradient(circle at 1px 1px, #c3c5cb 1px, transparent 1px) 0 0 / 3px 3px;
}
.tool {
  display: grid; place-items: center;
  flex: 0 1 15px;
  height: 15px;
}
.tool svg { width: 10px; height: 10px; }
.tool.on { background: #dcebf9; border: 1px solid #7eaedb; }
.space { width: 3px; }
.rule { width: 1px; height: 12px; margin: 0 1px; background: #d0d0d2; }
.rot { margin: 0 1px; }
.t-select { width: 29px; padding-left: 3px; }
.word { display: flex; align-items: center; gap: 1px; text-align: left; }
.word svg { width: 10px; height: 10px; }
.word .caret { margin-left: 1px; }
.t-mode { width: 42px; }
.t-clip { width: 60px; }
.t-empty { width: 36px; }
.t-extend { width: 50px; }
.t-selby { width: 58px; }
.t-convert { width: 48px; }
.toolbar .more { align-self: end; color: #000; }

/* 3D viewport */
.viewport {
  position: relative;
  flex: 1; min-height: 0;
  overflow: hidden;
  background: linear-gradient(#6b8bdd, #8aa3e6 25%, #fff);
}
.scene { width: 100%; height: 100%; }
.scene text { font: 8px Roboto, sans-serif; fill: #111; }
.scene .axis-y { fill: #4d8f6d; }
.scene .axis-x { fill: #c4506e; }
.scene .brand { font: italic bold 14px "Open Sans", sans-serif; fill: #fff; }
.caption {
  position: absolute; left: 10px; top: 9px;
  font-family: Roboto, "Open Sans", sans-serif;
  color: #0d1430;
}
.caption strong { color: #000; }
.legend { display: flex; align-items: center; gap: 4px; margin-top: 10px; }
.legend i { width: 10px; height: 10px; background: #f5333b; border: 1px solid #40101c; }

/* Bottom panels */
.bottom {
  display: grid;
  grid-template-columns: 9fr 7fr;
  column-gap: 2px;
  height: 142px;
  padding-top: 1px;
}
.graph { display: flex; flex-direction: column; background: #fff; }
.graph .panel-head { padding-right: 3px; }
.chart {
  display: flex; flex-direction: column;
  flex: 1;
  padding: 2px 15px 8px 22px;
}
.tick { align-self: end; height: 11px; }
.tick.strong { color: #000; font-weight: bold; }
.plot {
  flex: 1;
  margin-top: 4px;
  border: 1px solid #c6c6c6;
  border-left-color: #e6e6e6;
  border-right: 2px solid #000;
  background: linear-gradient(#dcdcdc, #dcdcdc) 0 50% / 100% 1px no-repeat;
}
.tick.low { height: 20px; margin: 5px 0 0; }
.stepbar {
  height: 9px;
  background: #0b70cb;
  color: #fff;
  line-height: 9px;
  text-align: center;
}
.tabular { background: #a0a0a0; }
.data { border-collapse: collapse; table-layout: fixed; width: 178px; }
.data th, .data td {
  height: 10px;
  padding: 0 2px;
  border: 1px solid #a9a9a9;
  border-left-width: 0;
  background: #e4e4e4;
  font-weight: normal;
  line-height: 9px;
  text-align: left;
  white-space: nowrap;
  color: #222;
}
.data th { height: 12px; background: #f5f5f5; }
.data .num { width: 11px; }
.data .steps { width: 24px; }
.data .time { width: 31px; }
.data small { font-size: 7px; }
.data .region { color: #a8323c; font-family: Roboto, sans-serif; }
.data label { display: flex; align-items: center; gap: 4px; }
.data input {
  appearance: none;
  width: 9px; height: 9px;
  border: 1px solid #777;
  background: #fff;
}
.data input:checked::after {
  content: "";
  display: block;
  width: 5px; height: 3px;
  margin: 1px;
  border: solid #000;
  border-width: 0 0 2px 2px;
  transform: rotate(-45deg);
}

/* Status bar */
.status {
  display: flex; align-items: center; justify-content: flex-end;
  gap: 12px;
  height: 14px;
  background: #0a7ac8;
  color: #fff;
  font-family: Roboto, "Open Sans", sans-serif;
  white-space: nowrap;
}
.messages, .metric { display: flex; align-items: center; gap: 2px; }
.messages svg { width: 11px; height: 9px; }
.metric { gap: 4px; padding-left: 2px; }
.up { width: 5px; height: 3px; background: #fff; clip-path: polygon(50% 0, 100% 100%, 0 100%); }
```
